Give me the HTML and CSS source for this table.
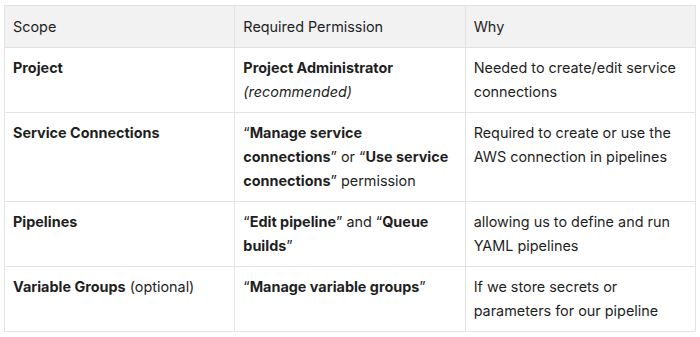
FILE: index.html
```html
<!DOCTYPE html>
<html>
<head>
<meta charset="utf-8">
<link rel="stylesheet" href="styles.css">
</head>
<body>
<table class="perm-table">
  <thead>
    <tr><th>Scope</th><th>Required Permission</th><th>Why</th></tr>
  </thead>
  <tbody>
    <tr>
      <td><strong>Project</strong></td>
      <td><strong>Project Administrator</strong><br><em>(recommended)</em></td>
      <td>Needed to create/edit service connections</td>
    </tr>
    <tr>
      <td><strong>Service Connections</strong></td>
      <td>“<strong>Manage service connections</strong>” or “<strong>Use service connections</strong>” permission</td>
      <td>Required to create or use the AWS connection in pipelines</td>
    </tr>
    <tr>
      <td><strong>Pipelines</strong></td>
      <td>“<strong>Edit pipeline</strong>” and “<strong>Queue builds</strong>”</td>
      <td>allowing us to define and run YAML pipelines</td>
    </tr>
    <tr>
      <td><strong>Variable Groups</strong> (optional)</td>
      <td>“<strong>Manage variable groups</strong>”</td>
      <td>If we store secrets or parameters for our pipeline</td>
    </tr>
  </tbody>
</table>
</body>
</html>
```
FILE: styles.css
```css
html, body {
  margin: 0;
  background: #ffffff;
}
body {
  padding: 5px 4px 0 4px;
  font-family: Inter, "Noto Sans", sans-serif;
  font-size: 14.4px;
  line-height: 24px;
  color: #1f1f1f;
}
.perm-table {
  width: 692px;
  border-collapse: collapse;
  table-layout: fixed;
}
.perm-table th,
.perm-table td {
  border: 1px solid #e3e3e3;
  padding: 8px 12px 8px 8px;
  text-align: left;
  vertical-align: top;
  font-weight: 400;
}
.perm-table thead th {
  background: #f2f2f2;
  padding-top: 9px;
}
.perm-table strong {
  font-weight: 700;
}
.perm-table em {
  font-style: italic;
}
```
